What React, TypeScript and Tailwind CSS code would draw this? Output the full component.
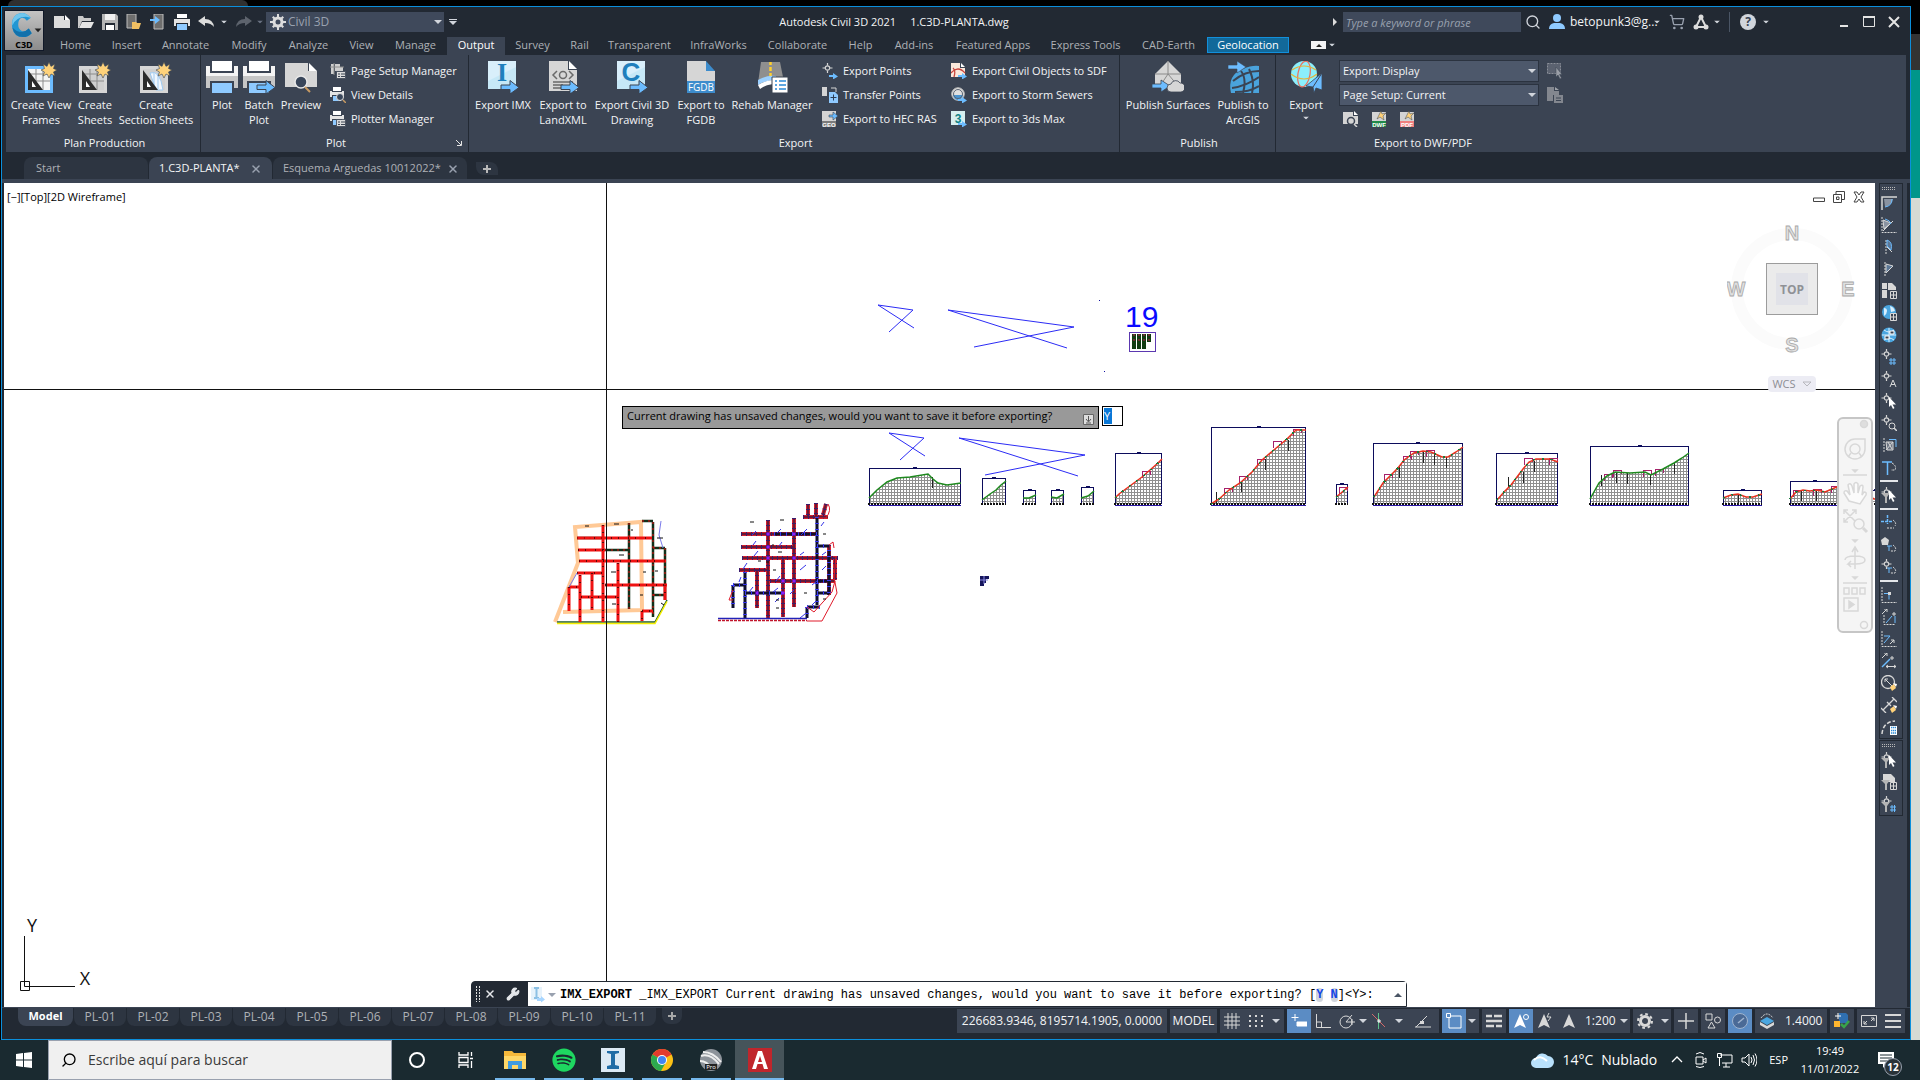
import type { ReactNode } from 'react'
import { Search, ShoppingCart, Wrench, X } from 'lucide-react'
import { FaSpotify } from 'react-icons/fa'

type IconProps = { children: ReactNode; size?: string; box?: string }

function Icon({ children, size = 'size-4', box = '0 0 16 16' }: IconProps) {
  return (
    <svg viewBox={box} className={`${size} shrink-0`} fill="none" aria-hidden="true">
      {children}
    </svg>
  )
}

function Caret({ className = 'text-gray-300' }: { className?: string }) {
  return (
    <svg viewBox="0 0 8 4" className={`h-1 w-2 shrink-0 ${className}`} aria-hidden="true">
      <path d="M0 0h8L4 4z" fill="currentColor" />
    </svg>
  )
}

const star = <path d="M24 1l2 4.500 4-2.500-1.500 4.500L32 9l-3.500 2 1.500 4-4-2-2 4-2-4-4 2 1.500-4L16 9l3.500-1.500L18 3l4 2.500z" fill="#ffd27a" stroke="#3b4453" strokeWidth=".6" />
const bigArrow = <path d="M14 24h9v-4.500l9 7-9 6.500v-4.500h-9z" fill="#6cbcff" stroke="#3b4453" />
const smallArrow = <path d="M7 12h4v-2l5 3.500-5 3V14H7z" fill="#6cbcff" />
const listBox = (
  <g>
    <path d="M6.500 8.500h9v7h-9z" fill="#dcdcdc" stroke="#3b4453" strokeWidth=".8" />
    <path d="M8 11h2m1 0h4M8 13.500h2m1 0h4" stroke="#3b4453" />
  </g>
)
const smallPrinter = (
  <g>
    <path d="M3 0h8v4H3z" fill="#fff" />
    <path d="M0 4h2v1h10V4h2v6h-2V8H2v2H0z" fill="#e4e4e4" />
    <path d="M3 9h8v5H3z" fill="#8fcaff" />
  </g>
)
const pointMark = (
  <g stroke="#d4d4d4" strokeWidth="1.200">
    <circle cx="5.500" cy="5" r="2.200" />
    <path d="M5.500 0v2.500M5.500 7.500V10M.5 5H3M8 5h2.500" />
  </g>
)

function SheetIcon({ kind }: { kind: 'frame' | 'sheet' | 'section' }) {
  return (
    <Icon size="size-8" box="0 0 32 32">
      <path d="M0 5h28v27H0z" fill={kind === 'frame' ? '#6cbcff' : '#d6d6d6'} />
      <path d="M3 8h22v21H3z" fill={kind === 'frame' ? '#f4f4f4' : '#cfcfcf'} />
      {kind === 'section' ? (
        <path d="M10 12q10-4 13 17H16zM14 12v14M18 12v16" fill="#f2f7fd" stroke="#9dc9f0" />
      ) : (
        <path d="M3 13h22M3 20h22M11 8v21M18 8v21" stroke="#8b8b8b" />
      )}
      <path d="M3 9l15 20H3z" fill="#2b2b2b" />
      <path d="M7 20l4 6H7z" fill="#fff" />
      {star}
    </Icon>
  )
}

function PrinterIcon({ batch }: { batch?: boolean }) {
  return (
    <Icon size="size-8" box="0 0 32 32">
      <path d="M6 0h20v10H6z" fill="#fff" />
      <path d="M0 5h4v7h24V5h4v10H0z" fill="#f4f4f4" />
      <path d="M0 15h32v12h-4v-7H4v7H0z" fill="#c6c6c6" />
      <path d="M6 22h20v10H6z" fill="#8fcaff" />
      {batch ? bigArrow : null}
    </Icon>
  )
}

function ProductIcon({ letter }: { letter: string }) {
  return (
    <Icon size="size-8" box="0 0 32 32">
      <path d="M1 0h28v28H1z" fill="#d9effb" />
      <path d="M1 20L29 6v22H1z" fill="#b9e2f5" opacity=".6" />
      <text x="15" y="20" textAnchor="middle" fontSize="26" fontWeight="700" fill="#1f7fbd" fontFamily={letter === 'I' ? 'Liberation Serif' : 'Liberation Sans'}>
        {letter}
      </text>
      {bigArrow}
    </Icon>
  )
}

const icons = {
  preview: (
    <Icon size="size-8" box="0 0 32 32">
      <path d="M0 2h23v8h9v16H0z" fill="#d6d6d6" />
      <path d="M24 2l8 8h-8z" fill="#fff" />
      <circle cx="16" cy="21" r="6" fill="#39465a" stroke="#e8e8e8" strokeWidth="1.500" />
      <path d="M20 26l5 5" stroke="#c79a63" strokeWidth="2" />
    </Icon>
  ),
  landxml: (
    <Icon size="size-8" box="0 0 32 32">
      <path d="M2 0h19v9h9v21H2z" fill="#d6d6d6" />
      <path d="M22 0l8 8h-8z" fill="#fff" />
      <circle cx="16" cy="14" r="3.500" stroke="#6a6a6a" strokeWidth="1.500" />
      <path d="M10 10l-4 4 4 4M22 10l4 4-4 4M6 21h20M6 24h10M6 27h10" stroke="#6a6a6a" strokeWidth="1.500" />
      {bigArrow}
    </Icon>
  ),
  fgdb: (
    <Icon size="size-8" box="0 0 32 32">
      <path d="M2 0h19v10h9v10H2z" fill="#d6d6d6" />
      <path d="M21 0l9 10h-9z" fill="#3d8ccc" />
      <path d="M2 20h28v12H2z" fill="#3d8ccc" />
      <text x="16" y="30" textAnchor="middle" fontSize="10" fontFamily="Open Sans" fill="#fff">FGDB</text>
    </Icon>
  ),
  rehab: (
    <Icon size="size-8" box="0 0 32 32">
      <path d="M5 1h19l3 15q-14 0-25 6z" fill="#8f8f8f" />
      <path d="M14.500 1v3m0 2v4m0 2v5" stroke="#ffd02e" strokeWidth="2.500" />
      <path d="M2 19q9-5 18-4v4q-10 0-18 5z" fill="#9bd0ff" />
      <path d="M2 24q8-5 15-5v4q-8 1-13 5z" fill="#fff" />
      <path d="M16 16h16v16H16z" fill="#fff" stroke="#3b4453" />
      <path d="M19 20h2m2 0h7M19 24h2m2 0h7M19 28h2m2 0h7" stroke="#2a8ad8" strokeWidth="1.500" />
    </Icon>
  ),
  surfaces: (
    <Icon size="size-8" box="0 0 32 32">
      <path d="M16 0l13 13v12H3V13z" fill="#d6d6d6" />
      <path d="M16 0v13M3 13h26M16 13l-8 12M16 13l10 12" stroke="#8a8a8a" />
      <path d="M0 23h9v-4l9 6-9 6v-4H0z" fill="#6cbcff" stroke="#3b4453" strokeWidth=".8" />
      <path d="M19 31a4 4 0 010-8 5 5 0 019-1 4.500 4.500 0 011 9z" fill="#d6d6d6" stroke="#3b4453" strokeWidth=".8" />
    </Icon>
  ),
  arcgis: (
    <Icon size="size-8" box="0 0 32 32">
      <path d="M32 5v27H4Q0 14 16 8q9-4 16-3z" fill="#4aa3dc" />
      <path d="M6 20q12-10 26-10M5 27q14-2 27-11M14 10q6 8 2 22M22 8q6 12 3 24M8 31q14 0 24-6" stroke="#3b4453" strokeWidth="2" />
      <path d="M1 4h9V0l9 6-9 6V8H1z" fill="#6cbcff" stroke="#3b4453" strokeWidth=".6" />
    </Icon>
  ),
  export: (
    <Icon size="size-8" box="0 0 32 32">
      <circle cx="14" cy="13" r="13" fill="#8ceffc" />
      <ellipse cx="14" cy="13" rx="6" ry="13" stroke="#e8705f" strokeWidth="1.200" transform="rotate(10 14 13)" />
      <path d="M1 13q13 10 26 0M2 9q12-8 24 0" stroke="#e6b33a" strokeWidth="1.200" />
      <path d="M32 12v17l-6-2-2 5-1-6-7-1z" fill="#6cbcff" stroke="#3b4453" strokeWidth=".8" />
      <path d="M32 12l-9 14" stroke="#3b4453" />
    </Icon>
  ),
}

const smallIcons = {
  pageSetup: (
    <Icon>
      <path d="M1 1h3v10H1zM5 1h5v3h3v4H5z" fill="#cfcfcf" />
      <path d="M0 4h14M4 0v12" stroke="#8e8e8e" />
      {listBox}
    </Icon>
  ),
  viewDetails: (
    <Icon>
      {smallPrinter}
      <circle cx="10" cy="10" r="3.500" fill="#39465a" stroke="#e0e0e0" />
      <path d="M13 13l3 3" stroke="#c79a63" strokeWidth="1.500" />
    </Icon>
  ),
  plotter: <Icon>{smallPrinter}{listBox}</Icon>,
  points: <Icon>{pointMark}{smallArrow}</Icon>,
  transfer: (
    <Icon>
      <path d="M0 0h5v9H0z" fill="#d4d4d4" />
      <path d="M2 4.500h3M9 1h5v4" stroke="#d4d4d4" />
      <path d="M7 5h6l3 3v8H7z" fill="#8fcaff" />
      <path d="M11.500 7.500v6M8.500 10.500h6" stroke="#2b3d55" />
    </Icon>
  ),
  hecras: (
    <Icon>
      <path d="M0 0h14v10H0z" fill="#d4d4d4" />
      <path d="M0 10h14v6H0z" fill="#7b7b7b" />
      <text x="7" y="15.500" textAnchor="middle" fontSize="6" fontWeight="700" fontFamily="Liberation Sans" fill="#fff">GEO</text>
      <path d="M7 4h4V1l5 4-5 4V6H7z" fill="#6cbcff" stroke="#3b4453" strokeWidth=".6" />
    </Icon>
  ),
  sdf: (
    <Icon>
      <path d="M0 0h9v5h5v9H0z" fill="#fbe9dc" />
      <path d="M10 0l4 4h-4z" fill="#fff" />
      <path d="M0 10q7-8 14 0M3 14q2-7-1-9" stroke="#c9463d" strokeWidth="1.300" />
      {smallArrow}
    </Icon>
  ),
  storm: (
    <Icon>
      <circle cx="7" cy="7" r="6.300" fill="#e0e0e0" stroke="#b9b9b9" />
      <path d="M2 8h10q-1 5-5 5T2 8z" fill="#4a94d0" />
      <circle cx="7" cy="7" r="4.500" stroke="#5a6472" />
      {smallArrow}
    </Icon>
  ),
  max: (
    <Icon>
      <path d="M0 0h14v14H0z" fill="#d6efef" />
      <text x="7" y="11.500" textAnchor="middle" fontSize="12" fontWeight="700" fontFamily="Liberation Sans" fill="#0f8386">3</text>
      {smallArrow}
    </Icon>
  ),
}

function BigButton({ icon, lines, width, children }: { icon: ReactNode; lines: string[]; width: string; children?: ReactNode }) {
  return (
    <button type="button" className={`flex shrink-0 flex-col items-center whitespace-nowrap ${width}`}>
      {icon}
      <span className="mt-1 leading-[15px]">
        {lines.map((line) => (
          <span key={line} className="block">{line}</span>
        ))}
      </span>
      {children}
    </button>
  )
}

function SmallButton({ icon, label }: { icon: ReactNode; label: string }) {
  return (
    <button type="button" className="flex h-6 items-center gap-[5px] whitespace-nowrap">
      {icon}
      {label}
    </button>
  )
}

function Panel({ title, width, children }: { title: string; width: string; children: ReactNode }) {
  return (
    <section className={`flex flex-col bg-[#3b4453] ${width}`}>
      <div className="flex flex-1 items-start pt-1.5">{children}</div>
      <h2 className="pb-px text-center leading-4">{title}</h2>
    </section>
  )
}

const ribbonTabs = [
  ['Home', 'w-[53px]'], ['Insert', 'w-[49px]'], ['Annotate', 'w-[69px]'], ['Modify', 'w-[58px]'], ['Analyze', 'w-[61px]'],
  ['View', 'w-[45px]'], ['Manage', 'w-[63px]'], ['Output', 'w-[58px]'], ['Survey', 'w-[55px]'], ['Rail', 'w-[39px]'],
  ['Transparent', 'w-[81px]'], ['InfraWorks', 'w-[77px]'], ['Collaborate', 'w-[81px]'], ['Help', 'w-[45px]'],
  ['Add-ins', 'w-[62px]'], ['Featured Apps', 'w-[96px]'], ['Express Tools', 'w-[89px]'], ['CAD-Earth', 'w-[77px]'],
]

function QuickAccess() {
  return (
    <div className="flex items-center">
      <div className="flex items-center gap-2">
        <button type="button" aria-label="New"><Icon><path d="M0 2h10v4h6v8H0z" fill="#dcdcdc" /><path d="M11 1l5 5h-5z" fill="#fff" /></Icon></button>
        <button type="button" aria-label="Open"><Icon><path d="M0 2h5l1 2h7v3H4l-3 7H0z" fill="#c9c9c9" /><path d="M4 8h12l-3 6H1z" fill="#e4e4e4" /></Icon></button>
        <button type="button" aria-label="Save"><Icon><path d="M0 0h14l2 2v14H0z" fill="#b5b5b5" /><path d="M3 0h10v6H3z" fill="#f0f0f0" /><path d="M3 9h10v7H3z" fill="#222933" /><path d="M4 11h8v5H4z" fill="#fff" /></Icon></button>
        <button type="button" aria-label="Open from web"><Icon><path d="M1 0h9v14H1z" fill="#6e6e6e" stroke="#bdbdbd" /><path d="M6 8h4l1 1h4l-2 6H6z" fill="#f0bf62" /></Icon></button>
        <button type="button" aria-label="Save to web"><Icon><path d="M4 0h9v15H4z" fill="#6e6e6e" stroke="#bdbdbd" /><path d="M0 5h5V2l5 4-5 4V7H0z" fill="#6cbcff" /></Icon></button>
        <button type="button" aria-label="Plot"><Icon><path d="M3 0h10v4H3z" fill="#fff" /><path d="M0 5h16v7h-2V9H2v3H0z" fill="#e4e4e4" /><path d="M3 10h10v6H3z" fill="#8fcaff" /></Icon></button>
        <button type="button" aria-label="Undo"><Icon><path d="M0 7l7-5v3q8 0 9 8-3-4-9-4v3z" fill="#dcdcdc" /></Icon></button>
      </div>
      <span className="ml-1.5 scale-75"><Caret /></span>
      <button type="button" aria-label="Redo" className="ml-2"><Icon><path d="M16 7L9 2v3Q1 5 0 13q3-4 9-4v3z" fill="#5d636d" /></Icon></button>
      <span className="ml-1 scale-75"><Caret className="text-gray-500" /></span>
      <label className="ml-0.5 flex h-5 w-[178px] items-center bg-[#3f495b] pr-0.5 pl-1">
        <Icon><path d="M7 0h2v3H7zM7 13h2v3H7zM0 7h3v2H0zM13 7h3v2h-3zM2 3.500L3.500 2l2 2L4 5.500zM10.500 12l1.500-1.500 2 2-1.500 1.500zM12.500 2L14 3.500l-2 2L10.500 4zM4 10.500L5.500 12l-2 2L2 12.500z" fill="#dcdcdc" /><circle cx="8" cy="8" r="4" stroke="#dcdcdc" strokeWidth="3" /></Icon>
        <select aria-label="Workspace" className="ml-0.5 flex-1 appearance-none bg-transparent text-xs text-gray-400">
          <option>Civil 3D</option>
        </select>
        <Caret />
      </label>
      <span className="ml-[5px] flex flex-col items-center gap-px">
        <span className="h-px w-2 bg-gray-300" />
        <Caret />
      </span>
    </div>
  )
}

function Header() {
  return (
    <header className="flex">
      <button type="button" aria-label="Application menu" className="mt-[3px] ml-[2px] flex h-[41px] w-10 shrink-0 flex-col items-center justify-between border border-gray-900 bg-linear-to-b from-[#c4c4c4] to-[#8c8c8c]">
        <svg viewBox="0 0 40 30" className="h-[30px] w-10" aria-hidden="true">
          <path d="M27 7Q20-1 12 4 6 9 8 18q2 9 11 9 5 0 9-4l-3-5q-4 4-7 3-4-2-4-7 0-6 4-7 3 0 5 3z" fill="#2196d3" />
          <path d="M27 7Q20-1 12 4 7 8 8 15q4-9 14-9z" fill="#6fc6ee" />
          <path d="M8 17q2 10 11 10 5 0 9-4l-3-5q-8 8-17-1z" fill="#1271ab" />
          <path d="M31 18h7l-3.500 4z" fill="#222" />
        </svg>
        <span className="text-[9px] leading-[10px] font-bold text-black">C3D</span>
      </button>
      <div className="min-w-0 flex-1">
        <div className="flex h-[30px] items-center justify-between pl-[10px]">
          <QuickAccess />
          <h1 className="flex gap-3.5 text-gray-100">
            <span>Autodesk Civil 3D 2021</span>
            <span>1.C3D-PLANTA.dwg</span>
          </h1>
          <div className="flex items-center">
            <Icon size="size-2" box="0 0 8 8"><path d="M2 0l4 4-4 4z" fill="#dcdcdc" /></Icon>
            <input aria-label="Search" placeholder="Type a keyword or phrase" className="ml-1 h-5 w-[178px] bg-[#3f495b] px-[3px] italic placeholder:text-gray-400" />
            <button type="button" aria-label="Search" className="ml-1"><Search className="size-4 text-gray-300" /></button>
            <button type="button" className="ml-2 flex items-center gap-1 text-gray-100">
              <Icon><circle cx="8" cy="4" r="4" fill="#8fcaff" /><path d="M0 15q0-5 5-6h6q5 1 5 6z" fill="#8fcaff" /></Icon>
              <span className="w-[84px] pl-px text-left text-xs whitespace-nowrap">betopunk3@g...</span>
            </button>
            <span className="scale-75"><Caret /></span>
            <button type="button" aria-label="App store" className="ml-2"><ShoppingCart className="size-4 text-gray-400" /></button>
            <button type="button" aria-label="Autodesk app" className="ml-2">
              <Icon><path d="M8 3L3 13h10z" stroke="#dcdcdc" strokeWidth="2" /><circle cx="8" cy="3" r="2.500" fill="#dcdcdc" /><circle cx="3" cy="13" r="2.500" fill="#dcdcdc" /><circle cx="13" cy="13" r="2.500" fill="#dcdcdc" /></Icon>
            </button>
            <span className="ml-1 scale-75"><Caret /></span>
            <span className="ml-2 h-5 w-px bg-gray-600" />
            <button type="button" aria-label="Help" className="ml-2.5 flex size-4 items-center justify-center rounded-full bg-gray-300 text-xs font-bold text-gray-700">?</button>
            <span className="ml-1.5 scale-75"><Caret /></span>
            <div className="ml-[68px] flex items-center gap-[13px] pr-2.5">
              <button type="button" aria-label="Minimize"><Icon size="size-3" box="0 0 12 12"><path d="M2 10h8" stroke="#e4e4e4" strokeWidth="2" /></Icon></button>
              <button type="button" aria-label="Maximize"><Icon size="size-3" box="0 0 12 12"><path d="M.5 1.500h11v9H.5z" stroke="#e4e4e4" /><path d="M0 1h12" stroke="#e4e4e4" strokeWidth="2" /></Icon></button>
              <button type="button" aria-label="Close"><Icon size="size-3" box="0 0 12 12"><path d="M1 1l10 10M11 1L1 11" stroke="#e4e4e4" strokeWidth="2" /></Icon></button>
            </div>
          </div>
        </div>
        <nav className="flex h-[18px] items-center pl-[5px]">
          {ribbonTabs.map(([label, width]) => (
            <a
              key={label}
              href="#"
              className={
                label === 'Output'
                  ? `flex h-full shrink-0 items-center justify-center bg-[#3b4453] pb-0.5 text-white ${width}`
                  : `flex h-full shrink-0 items-center justify-center pb-0.5 whitespace-nowrap text-[#aeb1b6] ${width}`
              }
            >
              {label}
            </a>
          ))}
          <a href="#" className="mb-0.5 flex h-4 w-[82px] items-center justify-center border border-[#1290dc] bg-[#12699a] text-white">Geolocation</a>
          <button type="button" aria-label="Minimize ribbon" className="mb-0.5 ml-[22px] flex items-center gap-0.5">
            <span className="flex h-2 w-[15px] items-center justify-center bg-gray-100">
              <Icon size="h-[3px] w-1.5" box="0 0 6 3"><path d="M0 3l3-3 3 3z" fill="#222" /></Icon>
            </span>
            <span className="scale-75"><Caret /></span>
          </button>
        </nav>
      </div>
    </header>
  )
}

function RibbonSelect({ label, value }: { label: string; value: string }) {
  return (
    <label className="flex h-[22px] w-[200px] items-center border border-[#2b3340] bg-[#4d586b] pr-0.5 pl-[3px]">
      <select aria-label={label} className="flex-1 appearance-none bg-transparent text-gray-100">
        <option>{value}</option>
      </select>
      <Caret />
    </label>
  )
}

function FormatIcon({ label, color }: { label: string; color: string }) {
  return (
    <Icon>
      <path d="M1 1h14v9H1z" fill="#d4d4d4" />
      <path d="M10 0l1 3 4-1-3 3 1 4-4-3-3 2 2-4z" fill="#ffd27a" stroke="#3b4453" strokeWidth=".5" />
      <path d="M1 10h14v6H1z" fill={color} />
      <text x="8" y="15.500" textAnchor="middle" fontSize="6" fontWeight="700" fontFamily="Liberation Sans" fill="#fff">{label}</text>
    </Icon>
  )
}

function Ribbon() {
  return (
    <div className="mx-1 flex h-[97px] gap-px text-gray-100">
      <Panel title="Plan Production" width="w-[194px] pl-[3px]">
        <BigButton icon={<SheetIcon kind="frame" />} lines={['Create View', 'Frames']} width="w-16" />
        <BigButton icon={<SheetIcon kind="sheet" />} lines={['Create', 'Sheets']} width="w-11" />
        <BigButton icon={<SheetIcon kind="section" />} lines={['Create', 'Section Sheets']} width="w-[78px]" />
      </Panel>
      <Panel title="Plot" width="relative w-[267px] pl-[3px]">
        <BigButton icon={<PrinterIcon />} lines={['Plot']} width="w-9" />
        <BigButton icon={<PrinterIcon batch />} lines={['Batch', 'Plot']} width="w-[38px]" />
        <BigButton icon={icons.preview} lines={['Preview']} width="w-[46px]" />
        <div className="-mt-0.5 ml-1.5 flex flex-col">
          <SmallButton icon={smallIcons.pageSetup} label="Page Setup Manager" />
          <SmallButton icon={smallIcons.viewDetails} label="View Details" />
          <SmallButton icon={smallIcons.plotter} label="Plotter Manager" />
        </div>
        <span className="absolute right-1.5 bottom-1.5">
          <Icon size="size-1.5" box="0 0 6 6"><path d="M0 0l5 5M5.500 1v4.500H1" stroke="#e4e4e4" /></Icon>
        </span>
      </Panel>
      <Panel title="Export" width="w-[650px] pl-[3px]">
        <BigButton icon={<ProductIcon letter="I" />} lines={['Export IMX']} width="w-[62px]" />
        <BigButton icon={icons.landxml} lines={['Export to', 'LandXML']} width="w-[58px]" />
        <BigButton icon={<ProductIcon letter="C" />} lines={['Export Civil 3D', 'Drawing']} width="w-20" />
        <BigButton icon={icons.fgdb} lines={['Export to', 'FGDB']} width="w-[58px]" />
        <BigButton icon={icons.rehab} lines={['Rehab Manager']} width="w-[84px]" />
        <div className="-mt-0.5 ml-2 flex w-[129px] flex-col">
          <SmallButton icon={smallIcons.points} label="Export Points" />
          <SmallButton icon={smallIcons.transfer} label="Transfer Points" />
          <SmallButton icon={smallIcons.hecras} label="Export to HEC RAS" />
        </div>
        <div className="-mt-0.5 flex flex-col">
          <SmallButton icon={smallIcons.sdf} label="Export Civil Objects to SDF" />
          <SmallButton icon={smallIcons.storm} label="Export to Storm Sewers" />
          <SmallButton icon={smallIcons.max} label="Export to 3ds Max" />
        </div>
      </Panel>
      <Panel title="Publish" width="w-[155px] pl-[3px]">
        <BigButton icon={icons.surfaces} lines={['Publish Surfaces']} width="w-[90px]" />
        <BigButton icon={icons.arcgis} lines={['Publish to', 'ArcGIS']} width="w-15" />
      </Panel>
      <section className="flex flex-1 flex-col bg-[#3b4453] pl-1">
        <div className="flex flex-1 items-start pt-1.5">
          <BigButton icon={icons.export} lines={['Export']} width="w-[52px]">
            <span className="mt-1 scale-75"><Caret /></span>
          </BigButton>
          <div className="-mt-px ml-[7px] flex flex-col gap-0.5">
            <RibbonSelect label="Export area" value="Export: Display" />
            <RibbonSelect label="Page setup" value="Page Setup: Current" />
            <div className="flex gap-3 pt-[3px] pl-1">
              <button type="button" aria-label="Preview">
                <Icon><path d="M0 1h10v4h5v8H0z" fill="#d4d4d4" /><path d="M11 0l4 4h-4z" fill="#fff" /><circle cx="8" cy="10" r="3.500" fill="#d4d4d4" stroke="#3b4453" strokeWidth="1.500" /><path d="M11 13l3 3" stroke="#d4d4d4" strokeWidth="1.500" /></Icon>
              </button>
              <button type="button" aria-label="Export DWF"><FormatIcon label="DWF" color="#218a4a" /></button>
              <button type="button" aria-label="Export PDF"><FormatIcon label="PDF" color="#f07f7f" /></button>
            </div>
          </div>
          <div className="mt-0.5 ml-2 flex flex-col gap-2">
            <Icon><path d="M.5.500h13v10H.5z" fill="#5b6270" stroke="#8a8f99" strokeDasharray="2 1" /><path d="M9 4v10l2-2 2 4 1.500-1-2-3.500H15z" fill="#9a9ea7" stroke="#3b4453" strokeWidth=".5" /></Icon>
            <Icon><path d="M0 0h7v4h5v4H6v6H0z" fill="#83878f" /><path d="M8 0l4 3H8z" fill="#a0a4ab" /><path d="M7 8h9v8H7z" fill="#83878f" /><path d="M9 11h5M9 13.500h5" stroke="#3b4453" /></Icon>
          </div>
        </div>
        <h2 className="w-[286px] pb-px text-center leading-4">Export to DWF/PDF</h2>
      </section>
    </div>
  )
}

function DocumentTabs() {
  return (
    <div className="border-b-4 border-[#3b4453] pl-[22px]">
      <div className="flex h-[27px] items-end gap-px text-[#aeb1b6]">
        <a href="#" className="flex h-[22px] w-[124px] items-center rounded-t-lg bg-[#2d3541] pt-px pl-3">Start</a>
        <a href="#" className="flex h-[22px] w-[123px] items-center justify-between rounded-t-lg bg-[#3b4453] pt-px pr-2.5 pl-2.5 text-gray-100">
          1.C3D-PLANTA*
          <X className="size-3 text-gray-400" strokeWidth={3} />
        </a>
        <a href="#" className="flex h-[22px] w-[194px] items-center justify-between rounded-t-lg bg-[#2d3541] pt-px pr-2 pl-2.5">
          Esquema Arguedas 10012022*
          <X className="size-3 text-gray-400" strokeWidth={3} />
        </a>
        <button type="button" aria-label="New drawing" className="mb-1 ml-2 flex h-[13px] w-[22px] items-center justify-center rounded-tr-lg rounded-bl-lg bg-[#2d3541]">
          <Icon size="size-2" box="0 0 8 8"><path d="M4 0v8M0 4h8" stroke="#b8b8b8" strokeWidth="2" /></Icon>
        </button>
      </div>
    </div>
  )
}

type Profile = { x: number; y: number; w: number; color: string; line: [number, number][]; steps?: [number, number][]; piers?: [number, number][] }

const green = '#1f8a1f'
const red = '#e8321e'

const profiles: Profile[] = [
  { x: 869, y: 468, w: 92, color: green, line: [[869, 498], [877, 490], [887, 482], [897, 478], [910, 477], [928, 474], [933, 479], [938, 483], [947, 485], [961, 483]], piers: [[932, 477]] },
  { x: 982, y: 478, w: 24, color: green, line: [[982, 500], [990, 494], [996, 490], [1001, 485], [1006, 481]] },
  { x: 1023, y: 490, w: 13, color: green, line: [[1023, 498], [1029, 498], [1036, 495]] },
  { x: 1051, y: 490, w: 13, color: green, line: [[1051, 497], [1057, 498], [1064, 494]] },
  { x: 1081, y: 487, w: 13, color: green, line: [[1081, 498], [1088, 496], [1094, 491]] },
  { x: 1115, y: 453, w: 47, color: red, line: [[1115, 498], [1119, 494], [1142, 477], [1158, 463], [1162, 459]], steps: [[1142, 471]] },
  { x: 1211, y: 427, w: 95, color: red, line: [[1211, 504], [1219, 499], [1229, 490], [1240, 483], [1252, 472], [1262, 460], [1275, 449], [1287, 439], [1296, 430], [1306, 430]], steps: [[1224, 488], [1239, 476], [1257, 459], [1273, 441], [1293, 429]], piers: [[1216, 492], [1241, 481], [1265, 459], [1288, 440]] },
  { x: 1336, y: 484, w: 12, color: red, line: [[1336, 497], [1341, 493], [1348, 487]], steps: [[1339, 487]] },
  { x: 1373, y: 443, w: 90, color: red, line: [[1374, 497], [1383, 483], [1398, 468], [1404, 460], [1414, 453], [1423, 451], [1431, 452], [1442, 457], [1448, 457], [1456, 452], [1463, 447]], steps: [[1384, 474], [1403, 456], [1410, 451], [1426, 450]], piers: [[1399, 467], [1423, 452], [1434, 454], [1446, 457]] },
  { x: 1496, y: 453, w: 62, color: red, line: [[1497, 500], [1504, 492], [1511, 485], [1517, 477], [1523, 469], [1529, 462], [1536, 459], [1550, 459], [1558, 462]], steps: [[1524, 458], [1549, 458]], piers: [[1508, 477], [1523, 472], [1534, 461]] },
  { x: 1590, y: 446, w: 99, color: green, line: [[1590, 499], [1599, 483], [1607, 476], [1615, 472], [1630, 473], [1645, 472], [1651, 475], [1663, 469], [1674, 463], [1682, 458], [1689, 453]], steps: [[1604, 474], [1613, 470], [1643, 470], [1655, 469]], piers: [[1601, 475], [1616, 472], [1627, 473], [1650, 474], [1674, 463]] },
  { x: 1723, y: 490, w: 39, color: red, line: [[1723, 498], [1731, 495], [1738, 494], [1746, 497], [1753, 497], [1762, 494]], piers: [[1738, 494]] },
  { x: 1790, y: 481, w: 49, color: red, line: [[1790, 499], [1796, 492], [1803, 490], [1810, 491], [1817, 490], [1825, 492], [1832, 489], [1839, 486]], steps: [[1793, 490], [1813, 489], [1831, 486]], piers: [[1801, 490], [1816, 490]] },
  { x: 1869, y: 490, w: 14, color: red, line: [[1869, 496], [1874, 499], [1883, 498]] },
]

function ProfileView({ x, y, w, color, line, steps = [], piers = [] }: Profile) {
  const path = line.map(([px, py]) => `${px},${py}`).join(' ')
  return (
    <g shapeRendering="crispEdges">
      <polygon points={`${x},504 ${path} ${x + w},504`} fill="url(#hatch)" />
      <path d={`M${x + 0.5} 504V${y + 0.5}H${x + w - 0.5}V504`} stroke="#0c0c5c" fill="none" />
      <path d={`M${x - 1} 503.500H${x + w}`} stroke="#111" strokeWidth="2" strokeDasharray="2 1" />
      {w > 30 ? <path d={`M${x} 505H${x + w}`} stroke="#2a17a8" strokeWidth="1" /> : null}
      <path d={`M${x + w / 2 - 2} ${y}h4`} stroke="#0c0c5c" strokeWidth="2" />
      {steps.map(([sx, sy]) => (
        <path key={sx} d={`M${sx} ${sy + 7}v-7h8v4`} stroke="#a5206a" fill="none" />
      ))}
      {piers.map(([sx, sy]) => (
        <path key={sx} d={`M${sx} ${sy}v11`} stroke="#222" />
      ))}
      <polyline points={path} stroke={color} strokeWidth="1.500" fill="none" shapeRendering="auto" />
      {color === red ? <polyline points={path} stroke="#1a7a3a" strokeWidth="1.500" strokeDasharray="2 7" fill="none" /> : null}
    </g>
  )
}

const siteRed = 'M577 538H652M578 550H605M579 561H666M577 573H603M605 585H667M569 587H580M581 597H619M603 525V622M580 575V622M592 573V610M569 587V611M618 563V622M642 611V621M642 611H653M665 585V600'
const siteDark = 'M577 538H603M605 550H629M629 523V609M653 522V617M665 548V600M653 548H665M653 595H665M642 521H653'
const pipeRed = 'M741 534H817M741 547H795M742 558H838M739 570H768M770 581H835M768 520V618M794 518V607M783 558V617M757 570V608M808 504V517M816 503V517M826 504L823 515M803 517H828M829 545V595M835 558V580'
const pipeDark = 'M817 517V605M745 593H782M733 585H744M745 572V618M733 585V608M817 546H829M829 550V595M817 593H829M817 581H829M807 607H820M807 607V618M774 534H817'

function SitePlans() {
  return (
    <g fill="none">
      <path d="M555 622L578 563 575 527 641 522 642 610 563 612" stroke="#ffc996" strokeWidth="4" />
      <path d="M557 622H655L667 600" stroke="#1e5a2c" strokeWidth="1.500" />
      <path d="M557 623.500H655L667 601.500" stroke="#f6f000" strokeWidth="1.500" />
      <path d={siteDark} stroke="#12301a" strokeWidth="2.500" />
      <path d={siteRed} stroke="#f01212" strokeWidth="3" />
      <path d={siteRed} stroke="#5c0a0a" strokeWidth="2" strokeDasharray="1 6 1 9" />
      <path d={siteDark} stroke="#e80d0d" strokeWidth="1" strokeDasharray="2 4" />
      <path d="M661 521L659 535 663 548M577 573L569 587" stroke="#7b7bea" />
      <path d="M585 526h4M614 524h5M631 530h2M619 555h5M611 572h5M643 572h3M655 571h3M612 604h4M640 595h3M657 538h6M661 603l3 2" stroke="#111" />

      <path d={pipeRed} stroke="#d4202e" strokeWidth="4" />
      <path d={pipeRed} stroke="#6a1a35" strokeWidth="2" />
      <path d={pipeRed} stroke="#3b1b6e" strokeWidth="4" strokeDasharray="1 4" />
      <path d={pipeDark} stroke="#10102e" strokeWidth="3" />
      <path d={pipeDark} stroke="#3a3af0" strokeWidth="4" strokeDasharray="1 5" />
      <path d="M718 618.500H807" stroke="#2222b8" strokeWidth="1.500" />
      <path d="M718 620.500H807" stroke="#c2142a" strokeWidth="1.500" strokeDasharray="3 1" />
      <path d="M836 557L834 577 837 593 822 621H807M807 607L814 612 832 592 835 581M828 504q4 6-2 14h-8M829 545l4-3 1 6M733 590l-4 10h4" stroke="#e01a2a" />
      <path d="M752 535l4-4M777 533l4-4M753 545l3-4M754 556l4-5M779 546l3-4M801 535l6-6M800 555l4-3M800 570l6-5M776 581l4-5M749 592l4-5M773 592l5-4M812 585l5-4M822 570l4-4M822 555l4-3M821 526l3-4M743 569l4-6M775 602l4-4M790 594l4-4M812 605l4-4M739 582l2-5M800 618l5-4" stroke="#3434e8" />
      <path d="M750 522h4M780 520h4M773 544v2M778 552h4M758 561h3M773 570h3M766 562h3M804 593h3M776 600h3M776 608h3M823 599h3M823 534h3" stroke="#111" />
      <path d="M768 534h.1M768 547h.1M794 534h.1M768 558h.1M794 558h.1M794 581h.1M783 593h.1M757 593h.1M783 581h.1" stroke="#8a1cff" strokeWidth="3" strokeLinecap="square" />
      <path d="M980 576h9v3h-3v4h-2v3h-4z" fill="#15155c" />
      <path d="M980 580h8M984 576v8" stroke="#8a8ae0" />
    </g>
  )
}

const blueMarks = 'M914 328L878 305 913 310 889 332M1067 348L948 310 1074 327 974 347'

function Drawing() {
  return (
    <svg className="absolute inset-0 size-full" aria-label="Model space">
      <defs>
        <pattern id="hatch" width="3" height="3" patternUnits="userSpaceOnUse">
          <path d="M0 .5h3M.5 0v3" stroke="#8f8f8f" />
        </pattern>
      </defs>
      <g transform="translate(-4 -183)">
        <path d={blueMarks} stroke="#2c2cf5" fill="none" />
        <path d={blueMarks} stroke="#2c2cf5" fill="none" transform="translate(11 128)" />
        <path d="M1099 300.500h1M1104 371.500h1" stroke="#1010a0" />
        <text x="1125" y="327" fontSize="30" fill="#0a0aff" fontFamily="Liberation Sans">19</text>
        <rect x="1129.500" y="332.500" width="26" height="19" fill="#fff" stroke="#5b38b0" />
        <path d="M1134 334V349M1139 334V349M1144 334V349M1149 334V342" stroke="#123d12" strokeWidth="4" />
        <path d="M1133 335h18M1133 340h18" stroke="#c01c50" strokeDasharray="2 3" />
        {profiles.map((profile) => (
          <ProfileView key={profile.x} {...profile} />
        ))}
        <SitePlans />
        <path d="M606.500 183V1007M0 389.500H1875" stroke="#111" />
        <path d="M24.500 936V986.500H75M20.500 981.500h9v9h-9z" stroke="#111" fill="none" />
        <g fontSize="18" fill="#111" fontFamily="Open Sans" textAnchor="middle">
          <text x="32" y="932">Y</text>
          <text x="85" y="985">X</text>
        </g>
      </g>
    </svg>
  )
}

function ViewCube() {
  return (
    <div className="absolute top-8 right-[18px] flex flex-col items-center">
      <svg viewBox="0 0 130 150" className="h-[150px] w-[130px]" aria-label="View cube">
        <circle cx="65" cy="74" r="55" fill="none" stroke="#fbfbfb" strokeWidth="12" />
        <rect x="39.500" y="48.500" width="51" height="51" fill="#ebebeb" stroke="#9c9c9c" />
        <rect x="49" y="58" width="32" height="32" fill="#e1e2e8" />
        <text x="65" y="79" textAnchor="middle" fontSize="12" fontWeight="700" fill="#8f9196" fontFamily="Open Sans">TOP</text>
        <g fontSize="20" fontWeight="700" fill="#e0e0e0" stroke="#a8a8a8" strokeWidth=".8" textAnchor="middle" fontFamily="Liberation Sans">
          <text x="65" y="25">N</text>
          <text x="9" y="81">W</text>
          <text x="121" y="81">E</text>
          <text x="65" y="137">S</text>
        </g>
      </svg>
      <button type="button" className="mt-[11px] flex h-4 items-center gap-1.5 rounded bg-[#ececf4] px-1 text-[11px] text-[#8d8d93]">
        WCS
        <Icon size="h-1.5 w-2.5" box="0 0 10 6"><path d="M1 1h8L5 5z" stroke="#b8b8be" /></Icon>
      </button>
    </div>
  )
}

function NavigationBar() {
  return (
    <div className="absolute top-[234px] right-0.5 h-[216px] w-9 rounded-md border-2 border-[#c6c6c6] bg-[#f5f5f5]">
      <svg viewBox="0 0 32 212" className="h-[212px] w-8" fill="none" stroke="#d8d8d8" strokeWidth="1.500" aria-label="Navigation bar">
        <circle cx="25" cy="5" r="3.500" fill="#dedede" />
        <path d="M6 30a10 10 0 0110-10h10v10a10 10 0 01-20 0z" />
        <circle cx="16" cy="30" r="5" />
        <path d="M9 38l3-4M23 38l-3-4" />
        <path d="M4 56h24M4 164h24" />
        <path d="M10 82l-5-8q0-3 3-2l3 4-2-10q2-3 4 1l2 7 0-9q2-3 4 0l0 9 2-7q3-2 3 1l-1 8 2-3q3 0 2 3l-6 9z" fill="#fbfbfb" />
        <path d="M5 91l12 12M17 91L5 103M5 95v-4h4M13 91h4v4M5 99v4h4" />
        <circle cx="20" cy="105" r="5" fill="#f5f5f5" />
        <path d="M24 109l4 4" strokeWidth="3" />
        <path d="M16 130v20M13 133l3-5 3 5M6 141q0-4 10-4t10 4-10 4H9l3-3M9 145l3 3" />
        <path d="M5 169h5v6H5zM13 169h5v6h-5zM21 169h5v6h-5zM5 179h14v13H5z" />
        <path d="M10 182l5 3.500-5 3.500z" fill="#d8d8d8" />
        <circle cx="25" cy="206" r="3.500" />
        <path d="M14 51h4l-2 2zM14 121h4l-2 2zM14 158h4l-2 2z" fill="#d8d8d8" />
      </svg>
    </div>
  )
}

function CommandPrompt() {
  return (
    <>
      <div className="absolute top-[223px] left-[618px] flex h-[23px] w-[477px] items-center justify-between border border-black bg-[#999] px-1 pb-0.5 text-black">
        <label htmlFor="answer" className="whitespace-nowrap">Current drawing has unsaved changes, would you want to save it before exporting?</label>
        <span className="mt-1.5">
          <Icon size="size-[11px]" box="0 0 11 11"><path d="M.5.500h10v10H.5z" fill="#ddd" stroke="#666" /><path d="M5.500 2v5M3 5l2.500 3L8 5M3 9h5" stroke="#555" /></Icon>
        </span>
      </div>
      <div className="absolute top-[223px] left-[1098px] flex h-5 w-[21px] items-center border border-black bg-white pl-px">
        <input id="answer" defaultValue="Y" className="h-4 w-2 bg-[#0a78d7] text-white" />
      </div>
    </>
  )
}

function CommandLine() {
  return (
    <div className="absolute bottom-0 left-[467px] flex h-[26px] w-[936px] rounded-t-sm border border-[#222933] bg-[#222933]">
      <div className="flex w-14 items-center pl-1 text-gray-200">
        <Icon size="h-4 w-1" box="0 0 4 16"><path d="M.5 0v16M3.500 0v16" stroke="#ddd" strokeDasharray="2 1" /></Icon>
        <X className="ml-1 size-3" strokeWidth={3} />
        <Wrench className="ml-2.5 size-3.5" fill="currentColor" />
      </div>
      <div className="flex flex-1 items-center bg-white pt-0.5 pr-1 pl-0.5 font-['Liberation_Mono',monospace] text-xs text-black">
        <Icon><path d="M1 0h11v13H1z" fill="#e6f2fb" /><path d="M4 1h5M6.500 1v10M4 11h5" stroke="#8cc0e4" strokeWidth="2" /><path d="M7 11h4V9l4 3.500-4 3V14H7z" fill="#a8d6ff" /></Icon>
        <span className="mr-1 ml-0.5"><Caret className="text-gray-400" /></span>
        <span className="whitespace-pre">
          <b>IMX_EXPORT</b>
          {' _IMX_EXPORT Current drawing has unsaved changes, would you want to save it before exporting? ['}
          <span className="rounded bg-gray-300 font-bold text-blue-700">Y</span>{' '}
          <span className="rounded bg-gray-300 font-bold text-blue-700">N</span>
          {']<Y>:'}
        </span>
        <span className="ml-auto rotate-180"><Caret className="text-gray-600" /></span>
      </div>
    </div>
  )
}

const w = '#d8d8d8'
const b = '#6cbcff'
const dashedAxes = <path d="M1 0v15.500H16" stroke={w} strokeDasharray="2 1" />
const funnel = <path d="M0 6h9L6 10v6H4v-6z" fill="#b5b5b5" />
const miniGrid = <path d="M9.500 8.500h6v7h-6zM12.500 8.500v7M9.500 12h6" fill="#3b4453" stroke={w} />

const transparentTools: ReactNode[] = [
  <><path d="M1 15V2H16" stroke={w} strokeWidth="1.500" /><path d="M3 4h9Q11 10 4 12z" fill="#8a93a1" /><path d="M11 4q0 7-7 8" stroke={b} /></>,
  <><path d="M1 0v15.500H16" stroke={w} strokeDasharray="2 1" /><path d="M2 14L12 4M2 3l8 3-7 6z" fill="#8a93a1" stroke={w} /><path d="M4 2q5 1 6 5" stroke={b} /></>,
  <><path d="M5 1v14" stroke={w} strokeDasharray="2 1" /><path d="M6 1q6 2 4 10l-4-4z" fill="#5d7897" stroke={b} /><path d="M6 8l5 5" stroke={w} /></>,
  <><path d="M4 1v15" stroke={w} strokeDasharray="2 1" /><path d="M5 3l7 2-7 7z" fill="#5d7897" stroke={w} /></>,
  <><path d="M1 0h5v6H1zM7 0h4l4 4v3H7zM1 7h5v8H1z" fill={w} />{miniGrid}</>,
  <><circle cx="8" cy="7" r="7" fill="#4aa6e0" /><path d="M3 3q3 0 3 3t-3 5M9 1q4 1 5 5l-4 1z" fill="#d9f0ff" />{miniGrid}</>,
  <><circle cx="8" cy="8" r="7.500" fill="#4aa6e0" /><path d="M1 8h14M8 1v14M3 3q5 4 10 0M3 13q5-4 10 0" stroke="#d9f0ff" /><path d="M4 9h4v3H4zM9 4h4v3H9z" fill="#3b4453" stroke="#fff" /></>,
  <>{pointMark}<path d="M8 11h7M8 14h7M10 9v7M13 9v7" stroke={b} /></>,
  <>{pointMark}<path d="M9 16l3-7 3 7M10 13.500h4" stroke={w} /></>,
  <>{pointMark}<path d="M8 4v10l2-2 2 4 1.500-1-2-3.500H15z" fill="#fff" /></>,
  <>{pointMark}<circle cx="11" cy="11" r="3" stroke={w} /><path d="M13 13l3 3" stroke={w} strokeWidth="1.500" /></>,
  <><path d="M3 1v15" stroke={w} strokeDasharray="2 1" /><path d="M5 5h7v8H6zM5 13l7-8M7 5l4 7" stroke={w} fill="#6e7683" /><path d="M8 2.500h7V10" stroke={b} /></>,
  <><path d="M1 3h10M6.500 3v13" stroke={b} strokeWidth="1.500" /><path d="M11 4q5 3 3 7h-4" stroke={w} strokeDasharray="2 1" /></>,
]
const filterTool = <>{pointMark}{funnel}<path d="M8 3v10l2-2 2 4 1.500-1-2-3.500H15z" fill="#fff" /></>
const alignmentTools: ReactNode[] = [
  <><path d="M0 6.500h11M6.500 0v9" stroke={b} strokeWidth="1.500" strokeDasharray="3 1" /><path d="M12 5q4 3 2 6M6 13h7" stroke={w} strokeDasharray="2 1" /></>,
  <><path d="M4 0l4 3-1 5H1L0 3z" fill={w} /><path d="M8 9v5M6 9h5" stroke={b} /><path d="M12 8q4 3 2 6H9" stroke={w} strokeDasharray="2 1" /></>,
  <>{pointMark}<path d="M8 9v5M6 9h5" stroke={b} /><path d="M12 8q4 3 2 6H9" stroke={w} strokeDasharray="2 1" /></>,
]
const profileTools: ReactNode[] = [
  <>{dashedAxes}<path d="M3 6.500h5v6" stroke={b} /><path d="M7 5h3v3H7z" fill={w} /></>,
  <><path d="M3 6v9.500H14" stroke={w} strokeDasharray="2 1" /><path d="M1 5l5-5M3 0h3v3M12 4h2v2h-2z" stroke={w} /><path d="M5 14l6-7M14 7v7" stroke={b} /></>,
  <>{dashedAxes}<path d="M3 5h6L3 12" stroke={b} /><path d="M9 13l4-4M10 9h3v3" stroke={w} /></>,
  <><path d="M1 5l5-5M3 0h3v3M10 4h2v2h-2zM5 13.500h10M7 12l-2 1.500L7 15M13 12l2 1.500-2 1.500" stroke={w} /><path d="M1 14L9 6" stroke={b} strokeWidth="1.500" /></>,
  <><circle cx="7" cy="7" r="6.500" stroke={w} strokeWidth="1.300" /><path d="M4 4l8 8M4 7V4h3" stroke={w} /><path d="M9 12l4-3 2 4-4 3z" fill="#ffd27a" /><path d="M12 8l4 1-1 3z" fill="#fff" /></>,
  <><path d="M2 13L13 2M0 11l5 5M11 0l5 5M6 5l4 4" stroke={w} strokeWidth="1.300" /><path d="M9 12l4-3 2 4-4 3z" fill="#ffd27a" /><path d="M12 8l4 1-1 3z" fill="#fff" /></>,
  <><path d="M1 15Q2 3 14 2" stroke={w} strokeWidth="1.500" strokeDasharray="4 2" /><path d="M9 7h7v9H9z" fill="#fff" /><path d="M10 8.500h5M10 11.500h5M10 14h5" stroke="#2a8ad8" strokeWidth="1.500" strokeDasharray="1.300 .6" /></>,
]
const filterTools: ReactNode[] = [
  filterTool,
  <><path d="M2 0h8l4 4v4H2z" fill={w} />{funnel}{miniGrid}</>,
  <>{pointMark}{funnel}<path d="M9 11h6M9 14h6M11 9v7M13.500 9v7" stroke={b} /></>,
]

function ToolGroup({ tools }: { tools: ReactNode[] }) {
  return (
    <>
      {tools.map((tool, index) => (
        <button key={index} type="button" aria-label="Tool" className="flex h-[22px] w-full items-center justify-center">
          <Icon>{tool}</Icon>
        </button>
      ))}
    </>
  )
}

const grip = (
  <svg viewBox="0 0 14 3" className="mx-auto mt-[3px] mb-0.5 block h-[3px] w-3.5" aria-hidden="true">
    <path d="M0 .5h14M0 2.500h14" stroke="#b8b8b8" strokeDasharray="1 1" />
  </svg>
)
const separator = <span className="my-0.5 block h-0.5 bg-gray-200" />

function SideToolbar() {
  return (
    <aside className="mr-[3px] w-8 shrink-0 bg-[#3b4453] px-1">
      <div className="border border-[#222933] pr-1">
        {grip}
        <ToolGroup tools={transparentTools} />
        {separator}
        <ToolGroup tools={[filterTool]} />
        {separator}
        <ToolGroup tools={alignmentTools} />
        {separator}
        <ToolGroup tools={profileTools} />
      </div>
      <div className="mt-px border border-[#222933] pr-1">
        {grip}
        <ToolGroup tools={filterTools} />
      </div>
    </aside>
  )
}

const layouts = ['PL-01', 'PL-02', 'PL-03', 'PL-04', 'PL-05', 'PL-06', 'PL-07', 'PL-08', 'PL-09', 'PL-10', 'PL-11']

function StatusIcon({ children, active }: { children: ReactNode; active?: boolean }) {
  return (
    <button type="button" aria-label="Drafting setting" className={active ? 'flex h-6 w-6 items-center justify-center bg-[#5b8cc4]' : 'flex h-6 w-6 items-center justify-center'}>
      <Icon>{children}</Icon>
    </button>
  )
}

function StatusBar() {
  const group = 'flex h-6 items-center bg-[#3b4453]'
  return (
    <footer className="flex h-8 justify-between border-t border-[#3b4453] pr-[5px] pl-4 text-gray-100">
      <div className="flex text-xs text-[#aeb1b6]">
        <a href="#" className="flex h-[18px] w-[55px] items-center justify-center rounded-b-lg bg-[#3b4453] pb-px text-[11px] font-bold text-white">Model</a>
        {layouts.map((layout) => (
          <a key={layout} href="#" className="flex h-[18px] w-[53px] items-center justify-center rounded-b-lg border-l border-[#222933] bg-[#2d3541] pb-px">
            {layout}
          </a>
        ))}
        <button type="button" aria-label="New layout" className="ml-1.5 flex h-4 w-5 items-center justify-center rounded-b-lg bg-[#2d3541]">
          <Icon size="size-2" box="0 0 8 8"><path d="M4 0v8M0 4h8" stroke="#a8a8a8" strokeWidth="2" /></Icon>
        </button>
      </div>
      <div className="flex gap-[3px] pt-px text-xs">
        <span className={`${group} w-[210px] justify-center`}>226683.9346, 8195714.1905, 0.0000</span>
        <button type="button" className={`${group} w-[47px] justify-center`}>MODEL</button>
        <div className={`${group} w-16`}>
          <StatusIcon><path d="M4 0v16M8 0v16M12 0v16M0 4h16M0 8h16M0 12h16" stroke={w} /></StatusIcon>
          <StatusIcon><path d="M1 3h14M1 8h14M1 13h14" stroke={w} strokeWidth="2" strokeDasharray="2 4" /></StatusIcon>
          <span className="ml-1"><Caret /></span>
        </div>
        <div className={`${group} w-[152px]`}>
          <StatusIcon active><path d="M4 1v7M.5 4.500h7M6 9h10v4H6z" fill="#fff" stroke="#fff" /></StatusIcon>
          <StatusIcon><path d="M1.500 1v13.500H16M1.500 9h5v5" stroke={w} /></StatusIcon>
          <StatusIcon><circle cx="7" cy="9" r="6" stroke={w} /><path d="M7 9h9M7 9l6-7M13 6v6" stroke={w} /></StatusIcon>
          <Caret />
          <StatusIcon><path d="M1 1l13 13" stroke="#d46a6a" /><path d="M7.500 0v16" stroke="#5cc08a" /><path d="M7 7h2v2H7z" stroke="#fff" /></StatusIcon>
          <span className="mr-2 ml-1"><Caret /></span>
          <StatusIcon><path d="M0 14h16M1 14L12 3" stroke={w} /><path d="M5 8h4v3H5z" fill={w} /></StatusIcon>
        </div>
        <div className={`${group} w-[37px]`}>
          <StatusIcon active><path d="M3 3h12v12H3z" stroke="#fff" /><path d="M.5.500h4v4h-4z" fill="#5b8cc4" stroke="#fff" /></StatusIcon>
          <span className="ml-0.5"><Caret /></span>
        </div>
        <div className={group}>
          <StatusIcon><path d="M0 3h6m2 0h8M0 8h16M0 13h8m2 0h6" stroke={w} strokeWidth="2.500" /></StatusIcon>
        </div>
        <div className={`${group} w-[121px]`}>
          <StatusIcon active><path d="M7 1L1 15l6-3 6 3z" fill="#fff" /><circle cx="13" cy="4" r="2.500" stroke="#fff" /></StatusIcon>
          <StatusIcon><path d="M7 1L1 15l6-3 6 3z" fill={w} /><path d="M12 0l-2 4h4l-3 4" stroke={w} /></StatusIcon>
          <StatusIcon><path d="M8 1L2 15l6-3 6 3z" fill={w} /></StatusIcon>
          <span className="mx-1">1:200</span>
          <Caret />
        </div>
        <div className={`${group} w-[38px]`}>
          <StatusIcon><circle cx="8" cy="8" r="4.500" stroke={w} strokeWidth="3" /><circle cx="8" cy="8" r="7" stroke={w} strokeWidth="2" strokeDasharray="2.750 2.750" /></StatusIcon>
          <span className="ml-1"><Caret /></span>
        </div>
        <div className={group}>
          <StatusIcon><path d="M8 0v16M0 8h16" stroke={w} strokeWidth="1.500" /></StatusIcon>
        </div>
        <div className={group}>
          <StatusIcon><path d="M1 1h6v6H1zM6.500 9l3.500 6H3z" stroke={w} /><circle cx="12.500" cy="7" r="3" stroke={w} /></StatusIcon>
        </div>
        <StatusIcon active><circle cx="8" cy="8" r="7.500" stroke="#9fb4cf" fill="#4a6a96" /><path d="M6 10l6-5" stroke="#9fb4cf" strokeWidth="1.500" /></StatusIcon>
        <div className={`${group} w-[72px]`}>
          <StatusIcon><path d="M1 9l7 4 7-4v3l-7 4-7-4z" fill={w} /><path d="M8 4l7 4-7 4-7-4z" fill="#4aa6e0" /><path d="M2 5q6-8 12 0" stroke={w} strokeDasharray="2 1" /></StatusIcon>
          <span className="ml-1.5">1.4000</span>
        </div>
        <div className={group}>
          <StatusIcon><path d="M5 0h7l2 2v8H5z" fill="#2f6fb0" /><path d="M1 3h6M4 0v6" stroke="#fff" /><path d="M0 8h6v6H0z" fill="#ffb52e" /><path d="M7 11l3 3 5-6" stroke="#38a34a" strokeWidth="2.500" /></StatusIcon>
        </div>
        <div className={group}>
          <StatusIcon><path d="M.5 2.500h15v11H.5z" stroke={w} /><path d="M3 11l3-3M3 8v3h3M13 5l-3 3M13 8V5h-3" stroke={w} /></StatusIcon>
          <StatusIcon><path d="M0 2h16M0 8h16M0 14h16" stroke={w} strokeWidth="2" /></StatusIcon>
        </div>
      </div>
    </footer>
  )
}

const taskbarApps: { name: string; open: boolean; active?: boolean; art: ReactNode }[] = [
  { name: 'Cortana', open: false, art: <circle cx="12" cy="12" r="7" stroke="#fff" strokeWidth="2" /> },
  { name: 'Task view', open: false, art: <path d="M5 4v3h9V4M5 20v-3h9v3M5 9.500h9v5H5zM17.500 4v4M17.500 13v7M16 10.500h3" stroke="#fff" strokeWidth="1.300" /> },
  { name: 'Explorer', open: true, art: <><path d="M1 3h8l2 2h12v16H1z" fill="#f6b93b" /><path d="M1 8h22v13H1z" fill="#ffd767" /><path d="M5 21v-8h14v8h-4v-4H9v4z" fill="#3f9be0" /></> },
  { name: 'Spotify', open: true, art: <FaSpotify size={24} color="#1ed760" /> },
  { name: 'InfraWorks', open: true, art: <><path d="M0 0h24v24H0z" fill="#dceaf5" /><path d="M6 3h12v2l-4 1v11l4 1v3H6v-3l4-1V6L6 5z" fill="#1f6ca6" /></> },
  { name: 'Chrome', open: true, art: <><circle cx="12" cy="12" r="11" fill="#fbc116" /><path d="M12 12L2.500 6.500A11 11 0 0121.500 6.500z" fill="#e33b2e" /><path d="M12 12L2.500 6.500A11 11 0 0011 23l5-9z" fill="#2da94f" /><circle cx="12" cy="12" r="5" fill="#fff" /><circle cx="12" cy="12" r="4" fill="#4285f4" /></> },
  { name: 'Google Earth Pro', open: true, art: <><circle cx="12" cy="12" r="11" fill="#8d939a" /><path d="M2 8q9-3 18 8M4 4q10 0 18 10M1 13q7 0 12 8" stroke="#eee" strokeWidth="2" /><path d="M6 16h12v6H6z" fill="#222" /><text x="12" y="21" fontSize="6" textAnchor="middle" fill="#fff" fontFamily="Open Sans">Pro</text></> },
  { name: 'Civil 3D', open: true, active: true, art: <><path d="M0 0h24v24H0z" fill="#c0262c" /><path d="M10 3h4l6 18h-4l-1.500-5h-5L8 21H4zM12 8l-2 6h4z" fill="#fff" fillRule="evenodd" /></> },
]

function Taskbar() {
  return (
    <div className="flex h-10 items-stretch justify-between bg-[#1a2a30] text-white">
      <div className="flex">
        <button type="button" aria-label="Start" className="flex w-12 items-center justify-center">
          <Icon><path d="M0 2l7-1v6.500H0zM8 1l8-1v7.500H8zM0 8.500h7V15l-7-1zM8 8.500h8V16l-8-1z" fill="#fff" /></Icon>
        </button>
        <label className="flex w-[344px] items-center gap-[11px] border border-gray-400 bg-[#f0f0f0] pl-3">
          <Search className="size-4 -scale-x-100 text-black" strokeWidth={2} />
          <input aria-label="Buscar" placeholder="Escribe aquí para buscar" className="flex-1 bg-transparent text-sm placeholder:text-[#3a3a3a]" />
        </label>
        {taskbarApps.map((app) => (
          <button key={app.name} type="button" aria-label={app.name} className={app.active ? 'flex w-[49px] flex-col items-center bg-[#46545a]' : 'flex w-[49px] flex-col items-center'}>
            <span className="flex flex-1 items-center"><Icon size="size-6" box="0 0 24 24">{app.art}</Icon></span>
            {app.open ? <span className={app.active ? '-mt-0.5 h-0.5 w-full bg-[#76b9ed]' : '-mt-0.5 h-0.5 w-10 bg-[#76b9ed]'} /> : null}
          </button>
        ))}
      </div>
      <div className="flex items-center">
        <button type="button" className="flex items-center text-sm">
          <Icon size="h-4 w-6" box="0 0 24 16"><path d="M6 16a5 5 0 010-10A7 7 0 0118 4a6 6 0 010 12z" fill="#b8e0fb" /><path d="M4 8q6-6 13 1" stroke="#fff" strokeWidth="2" /></Icon>
          <span className="ml-2">14°C</span>
          <span className="ml-2">Nublado</span>
        </button>
        <div className="ml-3 flex items-center gap-2">
          <Icon><path d="M3 10l5-5 5 5" stroke="#fff" strokeWidth="1.300" /></Icon>
          <Icon><path d="M3 5h7v7H3zM10 8l3-2v5l-3-2M3 2q4-3 8 0M3 14.500q4 2 8 0" stroke="#fff" /></Icon>
          <Icon><path d="M3 3h12v8H5M9 11v4M6 15h7M.5 1.500h4v4h-4zM2.500 6v8" stroke="#fff" /></Icon>
          <Icon><path d="M1 6h3l4-4v12l-4-4H1zM10 5q2 3 0 6M12 3q3 5 0 10M14 1.500q4 6.500 0 13" stroke="#fff" /></Icon>
        </div>
        <span className="ml-3 text-[11px]">ESP</span>
        <div className="ml-2.5 w-16 text-center text-[11px] leading-[18px]">
          <p>19:49</p>
          <p>11/01/2022</p>
        </div>
        <div className="relative ml-4 pr-[26px]">
          <Icon size="size-4"><path d="M0 0h16v12H8l-3 4v-4H0z" fill="#fff" /><path d="M2 3h12M2 6h12M2 9h8" stroke="#1a2a30" /></Icon>
          <span className="absolute top-1.5 left-1.5 flex size-[18px] items-center justify-center rounded-full border border-gray-400 bg-[#2a3338] text-[10px] font-bold">12</span>
        </div>
      </div>
    </div>
  )
}

export default function App() {
  return (
    <div className="flex h-screen min-h-[720px] flex-col overflow-hidden bg-black font-['Open_Sans','Noto_Sans',sans-serif] text-[11px]">
      <div className="h-1.5 pl-2">
        <div className="h-full w-60 rounded-t-lg bg-[#303030]" />
      </div>
      <div className="flex min-h-0 flex-1 pl-px">
        <div className="flex min-w-0 flex-1 flex-col border border-[#0b8fdc] bg-[#222933]">
          <Header />
          <Ribbon />
          <DocumentTabs />
          <div className="flex min-h-0 flex-1 pl-0.5">
            <main className="relative min-w-0 flex-1 overflow-hidden bg-white">
              <Drawing />
              <p className="absolute top-1.5 left-[3px] leading-4 text-black">[−][Top][2D Wireframe]</p>
              <div className="absolute top-2 right-2.5 flex gap-2">
                <Icon size="size-3" box="0 0 12 12"><path d="M.5 7h11v3.500H.5z" stroke="#444" /></Icon>
                <Icon size="size-3" box="0 0 12 12"><path d="M3 3V.5h8.500v8H9M.5 3.500h8v8h-8zM3.500 6h2.500v2.500H3.500z" stroke="#444" /></Icon>
                <Icon size="size-3" box="0 0 12 12"><path d="M1 1h3l2 3 2-3h3L8 6l3 5H8L6 8l-2 3H1l3-5z" stroke="#444" /></Icon>
              </div>
              <ViewCube />
              <NavigationBar />
              <CommandPrompt />
              <CommandLine />
            </main>
            <SideToolbar />
          </div>
          <StatusBar />
        </div>
        <div className="flex w-[9px] flex-col">
          <div className="h-7" />
          <div className="h-9 bg-[#333]" />
          <div className="h-32 bg-[#00968a]" />
          <div className="flex-1 bg-[#d6dad4]" />
        </div>
      </div>
      <Taskbar />
    </div>
  )
}
